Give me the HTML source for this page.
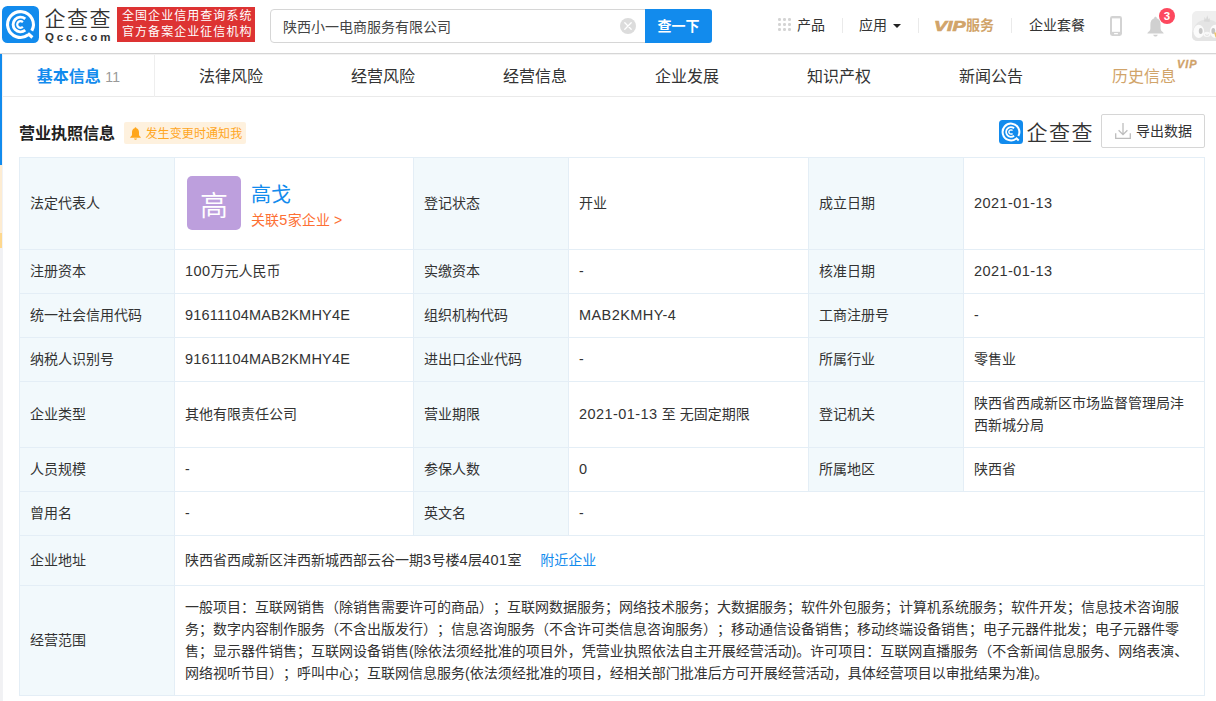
<!DOCTYPE html>
<html lang="zh-CN">
<head>
<meta charset="utf-8">
<title>陕西小一电商服务有限公司 - 企查查</title>
<style>
*{box-sizing:border-box;margin:0;padding:0}
html,body{width:1216px;height:701px;overflow:hidden;background:#fff}
body{position:relative;font-family:"Liberation Sans","Noto Sans CJK SC",sans-serif;font-size:14px;color:#333;line-height:1.2}
.abs{position:absolute}
/* ---------- header ---------- */
#hdr{position:absolute;left:0;top:0;width:1216px;height:55px;background:#fff;border-bottom:1px solid #f3f3f3}
#hdr:after{content:"";position:absolute;left:0;top:53px;width:1216px;height:1px;background:#d6d6d6}
#logo{position:absolute;left:2px;top:6px;width:37px;height:37px}
#brand{position:absolute;left:44.5px;top:6px;font-size:21px;line-height:26px;letter-spacing:1.5px;color:#333;white-space:nowrap;font-weight:350}
#brand2{position:absolute;left:45px;top:30px;font-size:11.5px;line-height:14px;font-weight:bold;color:#333;letter-spacing:2.8px;white-space:nowrap}
#redbadge{position:absolute;left:117px;top:7px;width:138px;height:35px;background:#dd3333;color:#fff;font-size:12px;line-height:16px;padding:1px 0 0 5px;letter-spacing:1.05px;white-space:nowrap}
#search{position:absolute;left:270px;top:9px;width:376px;height:34px;border:1px solid #d6d6d6;border-radius:4px 0 0 4px;background:#fff}
#search span{position:absolute;left:12px;top:9px;font-size:14px;line-height:17px;color:#444;white-space:nowrap}
#clear{position:absolute;left:620px;top:18px;width:16px;height:16px}
#sbtn{position:absolute;left:645px;top:9px;width:67px;height:34px;background:#128bed;color:#fff;font-weight:bold;font-size:14px;line-height:34px;text-align:center;border-radius:0 3px 3px 0}
.hn{position:absolute;top:17px;font-size:14px;line-height:17px;color:#333;white-space:nowrap}
.hsep{position:absolute;top:18px;width:1px;height:15px;background:#eaeaea}
/* ---------- tabs ---------- */
#tabs{position:absolute;left:3px;top:55px;width:1213px;height:42px;border-bottom:1px solid #eaeaea;background:#fff}
.tab{position:absolute;top:1px;height:41px;width:152px;text-align:center;font-size:16px;line-height:41px;color:#333;white-space:nowrap}
/* ---------- left bar ---------- */
#lb0{position:absolute;left:2px;top:54px;width:1px;height:647px;background:#f1f2f5}
#lb1{position:absolute;left:0;top:54px;width:2px;height:111px;background:#128bed}
#lb2{position:absolute;left:0;top:165px;width:2px;height:68px;background:#fdecd2}
#lb3{position:absolute;left:0;top:233px;width:2px;height:15px;background:#fed88e}
#lb4{position:absolute;left:0;top:248px;width:2px;height:453px;background:#f1f1f3}
/* ---------- section title ---------- */
#stitle{position:absolute;left:19px;top:124px;font-size:16px;line-height:20px;font-weight:bold;color:#222;white-space:nowrap}
#notify{position:absolute;left:124px;top:122px;width:122px;height:22px;background:#fef1de;border-radius:2px;color:#ffa61f;font-size:12px;line-height:22px;white-space:nowrap}
#notify span{position:absolute;left:21.5px;top:.5px;letter-spacing:.1px}
#slogo{position:absolute;left:999px;top:120px;width:24px;height:24px}
#sbrand{position:absolute;left:1026.5px;top:120px;font-size:21px;line-height:26px;letter-spacing:1.5px;color:#333;white-space:nowrap;font-weight:350}
#export{position:absolute;left:1101px;top:114px;width:104px;height:34px;border:1px solid #d6d6d6;border-radius:2px;background:#fff}
#export span{position:absolute;left:34px;top:8px;font-size:14px;line-height:17px;color:#333;white-space:nowrap}
/* ---------- table ---------- */
#tb{position:absolute;left:19px;top:157px;width:1185px;border-collapse:collapse;table-layout:fixed}
#tb td{text-spacing-trim:space-all;border:1px solid #e4eef6;padding:0 10px 2px 10px;font-size:14px;line-height:22px;color:#333;vertical-align:middle;background:#fff}
#tb td.k{background:#f2f9fc;color:#333}
a.lnk{color:#128bed;text-decoration:none}

#vip{position:absolute;left:934px;top:16px;font-size:15px;line-height:20px;font-weight:bold;font-style:italic;color:#d1a46a;letter-spacing:0;white-space:nowrap;-webkit-text-stroke:.7px #d1a46a;transform:scaleX(1.3);transform-origin:0 0}
#nbadge{position:absolute;left:1159px;top:8px;width:16px;height:16px;border-radius:8px;background:#fd485e;color:#fff;font-size:11.5px;font-weight:bold;line-height:16px;text-align:center}
#avatar{position:absolute;left:1192px;top:11px;width:30px;height:30px;border-radius:5px;overflow:hidden}
#hvip{position:absolute;font-size:11px;line-height:12px;font-weight:bold;font-style:italic;color:#d0a269;letter-spacing:.9px;-webkit-text-stroke:.3px #d0a269}
.ava{position:absolute;left:12px;top:18px;width:54px;height:54px;border-radius:5px;background:#bd9fdd;color:#fff;font-size:28px;line-height:62px;text-align:center;font-weight:350}
.pname{position:absolute;left:76px;top:25px;font-size:20px;line-height:24px;color:#128bed;white-space:nowrap}
.prel{position:absolute;left:76px;top:52.5px;font-size:14px;line-height:18px;color:#fd6f33;letter-spacing:.1px;white-space:nowrap}
.en,#tb td.en{letter-spacing:.42px;font-size:14.5px}
#tb td.en2{letter-spacing:.2px;font-size:14.5px}
</style>
</head>
<body>

<div id="hdr">
  <div id="logo"><svg viewBox="0 0 37 37" width="100%" height="100%" style="display:block"><rect width="37" height="37" rx="5.5" fill="#128bed"/><g fill="none" stroke="#fff" stroke-linecap="butt"><path d="M26.26 28.80A12.9 12.9 0 1 1 29.78 24.75" stroke-width="3.1"/><path d="M25.9 27.3L30.4 31.5" stroke-width="3.1"/><path d="M23.26 24.17A7.4 7.4 0 1 1 23.26 12.83" stroke-width="2.9"/><path d="M20.87 20.79A3.3 3.3 0 1 1 20.87 16.21" stroke-width="2.2"/></g></svg></div>
  <div id="brand">企查查</div>
  <div id="brand2">Qcc.com</div>
  <div id="redbadge">全国企业信用查询系统<br>官方备案企业征信机构</div>
  <div id="search"><span>陕西小一电商服务有限公司</span></div>

  <svg id="clear" viewBox="0 0 16 16"><circle cx="8" cy="8" r="8" fill="#dcdcdc"/><path d="M4.8 4.8L11.2 11.2M11.2 4.8L4.8 11.2" stroke="#fff" stroke-width="1.3" stroke-linecap="round"/></svg>
  <svg class="abs" style="left:778px;top:18px" width="13" height="13" viewBox="0 0 13 13" fill="#d4d4d4"><rect x="0" y="0" width="3" height="3" rx="1.2"/><rect x="5" y="0" width="3" height="3" rx="1.2"/><rect x="10" y="0" width="3" height="3" rx="1.2"/><rect x="0" y="5" width="3" height="3" rx="1.2"/><rect x="5" y="5" width="3" height="3" rx="1.2"/><rect x="10" y="5" width="3" height="3" rx="1.2"/><rect x="0" y="10" width="3" height="3" rx="1.2"/><rect x="5" y="10" width="3" height="3" rx="1.2"/><rect x="10" y="10" width="3" height="3" rx="1.2"/></svg>
  <svg class="abs" style="left:893px;top:24px" width="8" height="4" viewBox="0 0 8 4"><path d="M0 0H8L4 4Z" fill="#222"/></svg>
  <div id="vip">VIP</div>
  <svg class="abs" style="left:1110px;top:16px" width="12" height="20" viewBox="0 0 12 20"><rect x="0" y="0" width="12" height="20" rx="2.4" fill="#d3d3d3"/><rect x="2" y="2.4" width="8" height="13.4" fill="#fff"/><rect x="4" y="17.1" width="4" height="1.1" rx=".5" fill="#fff"/></svg>
  <svg class="abs" style="left:1147px;top:16px" width="17" height="21" viewBox="0 0 17 21" fill="#d0d0d0"><path d="M8.5 0.8C9.3 0.8 9.8 1.4 9.8 2.2C12.5 3 13.6 5.4 13.6 8.3V12.6C13.6 14.6 15 15.6 16.6 16.9V17.6H0.4V16.9C2 15.6 3.4 14.6 3.4 12.6V8.3C3.4 5.4 4.5 3 7.2 2.2C7.2 1.4 7.7 0.8 8.5 0.8Z"/><path d="M6.2 18.8H10.8C10.5 19.9 9.6 20.6 8.5 20.6C7.4 20.6 6.5 19.9 6.2 18.8Z"/></svg>
  <div id="nbadge">3</div>
  <div id="avatar"><svg viewBox="0 0 30 30" width="30" height="30"><rect width="30" height="30" fill="#efefef"/><path d="M-1 31C-1 15 6 8.500 15 8.500C24 8.500 31 15 31 31Z" fill="#e4e4e4"/><path d="M12 10.500L12.600 6L14 8.500L15.200 4.200L16.600 8.500L17.800 7L17.600 11Z" fill="#d9d9d9"/><ellipse cx="6.800" cy="20.300" rx="5.300" ry="6.600" fill="#fbfbfb"/><ellipse cx="23.200" cy="20.300" rx="5.300" ry="6.600" fill="#fbfbfb"/><ellipse cx="15" cy="23.300" rx="3.600" ry="2.600" fill="#f8f8f8"/><ellipse cx="8.700" cy="20" rx="1.900" ry="2.900" fill="#c6c6c6"/><ellipse cx="21.300" cy="20" rx="1.900" ry="2.900" fill="#c6c6c6"/><path d="M13 23.600Q15 25.200 17 23.600" stroke="#dcdcdc" stroke-width=".9" fill="none"/><path d="M22 21.500H30V26.500H23.500Z" fill="#ebc76f"/></svg></div>
  <div id="sbtn">查一下</div>
  <div class="hn" style="left:797px">产品</div>
  <div class="hsep" style="left:842px"></div>
  <div class="hn" style="left:859px">应用</div>
  <div class="hsep" style="left:918px"></div>
  <div class="hn" style="left:966px;color:#d1a46a;font-weight:bold">服务</div>
  <div class="hsep" style="left:1011px"></div>
  <div class="hn" style="left:1029px">企业套餐</div>
</div>

<div id="tabs">
  <div class="tab" style="left:0;border-right:1px solid #eee;height:42px;top:0;line-height:43px;color:#128bed;font-weight:bold">基本信息 <span style="font-size:14px;font-weight:normal;color:#999;letter-spacing:.3px;position:relative;top:-.5px">11</span></div>
  <div class="tab" style="left:152px">法律风险</div>
  <div class="tab" style="left:304px">经营风险</div>
  <div class="tab" style="left:456px">经营信息</div>
  <div class="tab" style="left:608px">企业发展</div>
  <div class="tab" style="left:760px">知识产权</div>
  <div class="tab" style="left:912px">新闻公告</div>
  <div class="tab" style="left:1065px;color:#d1a46a">历史信息</div>
  <div id="hvip" style="left:1174px;top:3px">VIP</div>
</div>

<div id="lb0"></div><div id="lb1"></div><div id="lb2"></div><div id="lb3"></div><div id="lb4"></div>

<div id="stitle">营业执照信息</div>
<div id="notify"><svg class="abs" style="left:5.5px;top:4.5px" width="11" height="13" viewBox="0 0 11 13" fill="#ffa61a"><path d="M5.5 0.3C6 0.3 6.4 0.7 6.4 1.2C8.2 1.7 9 3.3 9 5.2V7.6C9 8.8 9.8 9.5 10.8 10.3V10.8H0.2V10.3C1.2 9.5 2 8.8 2 7.6V5.2C2 3.3 2.8 1.7 4.6 1.2C4.6 0.7 5 0.3 5.5 0.3Z"/><path d="M4 11.5H7C6.8 12.3 6.2 12.8 5.5 12.8C4.8 12.8 4.2 12.3 4 11.5Z"/></svg><span>发生变更时通知我</span></div>
<div id="slogo"><svg viewBox="0 0 37 37" width="100%" height="100%" style="display:block"><rect width="37" height="37" rx="5.5" fill="#128bed"/><g fill="none" stroke="#fff" stroke-linecap="butt"><path d="M26.26 28.80A12.9 12.9 0 1 1 29.78 24.75" stroke-width="3.1"/><path d="M25.9 27.3L30.4 31.5" stroke-width="3.1"/><path d="M23.26 24.17A7.4 7.4 0 1 1 23.26 12.83" stroke-width="2.9"/><path d="M20.87 20.79A3.3 3.3 0 1 1 20.87 16.21" stroke-width="2.2"/></g></svg></div>
<div id="sbrand">企查查</div>
<div id="export"><svg class="abs" style="left:13px;top:8px" width="16" height="16" viewBox="0 0 16 16" fill="none" stroke="#bdbdbd" stroke-width="1.3"><path d="M8 0V11.4M3.6 7.2L8 11.6L12.4 7.2M0.7 10.2V15.3H15.3V10.2"/></svg><span>导出数据</span></div>

<table id="tb">
<colgroup><col style="width:155px"><col style="width:239px"><col style="width:155px"><col style="width:240px"><col style="width:155px"><col style="width:241px"></colgroup>
<tr style="height:92px"><td class="k">法定代表人</td><td style="position:relative;padding:0"><div class="ava">高</div><div class="pname">高戈</div><div class="prel">关联<span class="en">5</span>家企业 &gt;</div></td><td class="k">登记状态</td><td>开业</td><td class="k">成立日期</td><td class="en">2021-01-13</td></tr>
<tr style="height:44px"><td class="k">注册资本</td><td><span class="en">100</span>万元人民币</td><td class="k">实缴资本</td><td>-</td><td class="k">核准日期</td><td class="en">2021-01-13</td></tr>
<tr style="height:44px"><td class="k">统一社会信用代码</td><td class="en2">91611104MAB2KMHY4E</td><td class="k">组织机构代码</td><td class="en">MAB2KMHY-4</td><td class="k">工商注册号</td><td>-</td></tr>
<tr style="height:44px"><td class="k">纳税人识别号</td><td class="en2">91611104MAB2KMHY4E</td><td class="k">进出口企业代码</td><td>-</td><td class="k">所属行业</td><td>零售业</td></tr>
<tr style="height:66px"><td class="k">企业类型</td><td>其他有限责任公司</td><td class="k">营业期限</td><td><span class="en">2021-01-13 </span>至 无固定期限</td><td class="k">登记机关</td><td>陕西省西咸新区市场监督管理局沣西新城分局</td></tr>
<tr style="height:44px"><td class="k">人员规模</td><td>-</td><td class="k">参保人数</td><td class="en">0</td><td class="k">所属地区</td><td>陕西省</td></tr>
<tr style="height:44px"><td class="k">曾用名</td><td>-</td><td class="k">英文名</td><td colspan="3">-</td></tr>
<tr style="height:50px"><td class="k">企业地址</td><td colspan="5">陕西省西咸新区沣西新城西部云谷一期<span class="en">3</span>号楼<span class="en">4</span>层<span class="en">401</span>室 <a class="lnk" style="margin-left:15px">附近企业</a></td></tr>
<tr style="height:110px"><td class="k">经营范围</td><td colspan="5" style="white-space:nowrap">一般项目：互联网销售（除销售需要许可的商品）；互联网数据服务；网络技术服务；大数据服务；软件外包服务；计算机系统服务；软件开发；信息技术咨询服<br>务；数字内容制作服务（不含出版发行）；信息咨询服务（不含许可类信息咨询服务）；移动通信设备销售；移动终端设备销售；电子元器件批发；电子元器件零<br>售；显示器件销售；互联网设备销售(除依法须经批准的项目外，凭营业执照依法自主开展经营活动)。许可项目：互联网直播服务（不含新闻信息服务、网络表演、<br>网络视听节目）；呼叫中心；互联网信息服务(依法须经批准的项目，经相关部门批准后方可开展经营活动，具体经营项目以审批结果为准)。</td></tr>
</table>

</body>
</html>
